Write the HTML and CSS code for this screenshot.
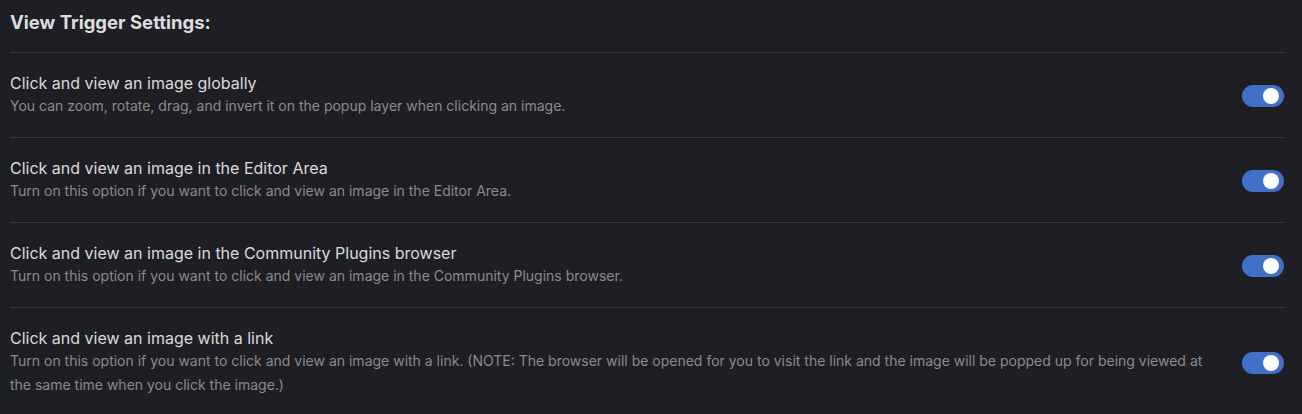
FILE: index.html
```html
<!DOCTYPE html>
<html>
<head>
<meta charset="utf-8">
<link rel="stylesheet" href="styles.css">
</head>
<body>
<div class="settings">
  <h3 class="heading">View Trigger Settings:</h3>
  <div class="item">
    <div class="info">
      <div class="name">Click and view an image globally</div>
      <div class="desc">You can zoom, rotate, drag, and invert it on the popup layer when clicking an image.</div>
    </div>
    <div class="control"><div class="toggle"><div class="knob"></div></div></div>
  </div>
  <div class="item">
    <div class="info">
      <div class="name">Click and view an image in the Editor Area</div>
      <div class="desc">Turn on this option if you want to click and view an image in the Editor Area.</div>
    </div>
    <div class="control"><div class="toggle"><div class="knob"></div></div></div>
  </div>
  <div class="item">
    <div class="info">
      <div class="name">Click and view an image in the Community Plugins browser</div>
      <div class="desc">Turn on this option if you want to click and view an image in the Community Plugins browser.</div>
    </div>
    <div class="control"><div class="toggle"><div class="knob"></div></div></div>
  </div>
  <div class="item">
    <div class="info">
      <div class="name">Click and view an image with a link</div>
      <div class="desc">Turn on this option if you want to click and view an image with a link. (NOTE: The browser will be opened for you to visit the link and the image will be popped up for being viewed at the same time when you click the image.)</div>
    </div>
    <div class="control"><div class="toggle"><div class="knob"></div></div></div>
  </div>
</div>
</body>
</html>
```
FILE: styles.css
```css
html, body {
  margin: 0;
  padding: 0;
  background: #1e1f25;
  font-family: Inter, "Noto Sans", sans-serif;
  -webkit-font-smoothing: antialiased;
}
.settings {
  padding: 0 18px 0 10px;
}
.heading {
  margin: 0;
  height: 53px;
  box-sizing: border-box;
  padding-top: 9px;
  font-size: 18.5px;
  font-weight: 700;
  line-height: 26px;
  color: #dcddde;
  border-bottom: 1px solid #363940;
}
.item {
  display: flex;
  align-items: center;
  gap: 24px;
  padding: 20px 0 19px;
  border-top: 1px solid #363940;
}
.heading + .item {
  border-top: none;
}
.info {
  flex: 1;
  min-width: 0;
}
.name {
  font-size: 16px;
  line-height: 20px;
  margin-bottom: 1px;
  color: #dadada;
}
.desc {
  font-size: 14px;
  line-height: 24px;
  color: #8a8a8a;
}
.control {
  flex: none;
}
.toggle {
  width: 42px;
  height: 22px;
  border-radius: 11px;
  background: #4170c8;
  display: flex;
  align-items: center;
  justify-content: flex-end;
  padding-right: 5px;
  box-sizing: border-box;
}
.knob {
  width: 16px;
  height: 16px;
  border-radius: 50%;
  background: #ffffff;
}
```
